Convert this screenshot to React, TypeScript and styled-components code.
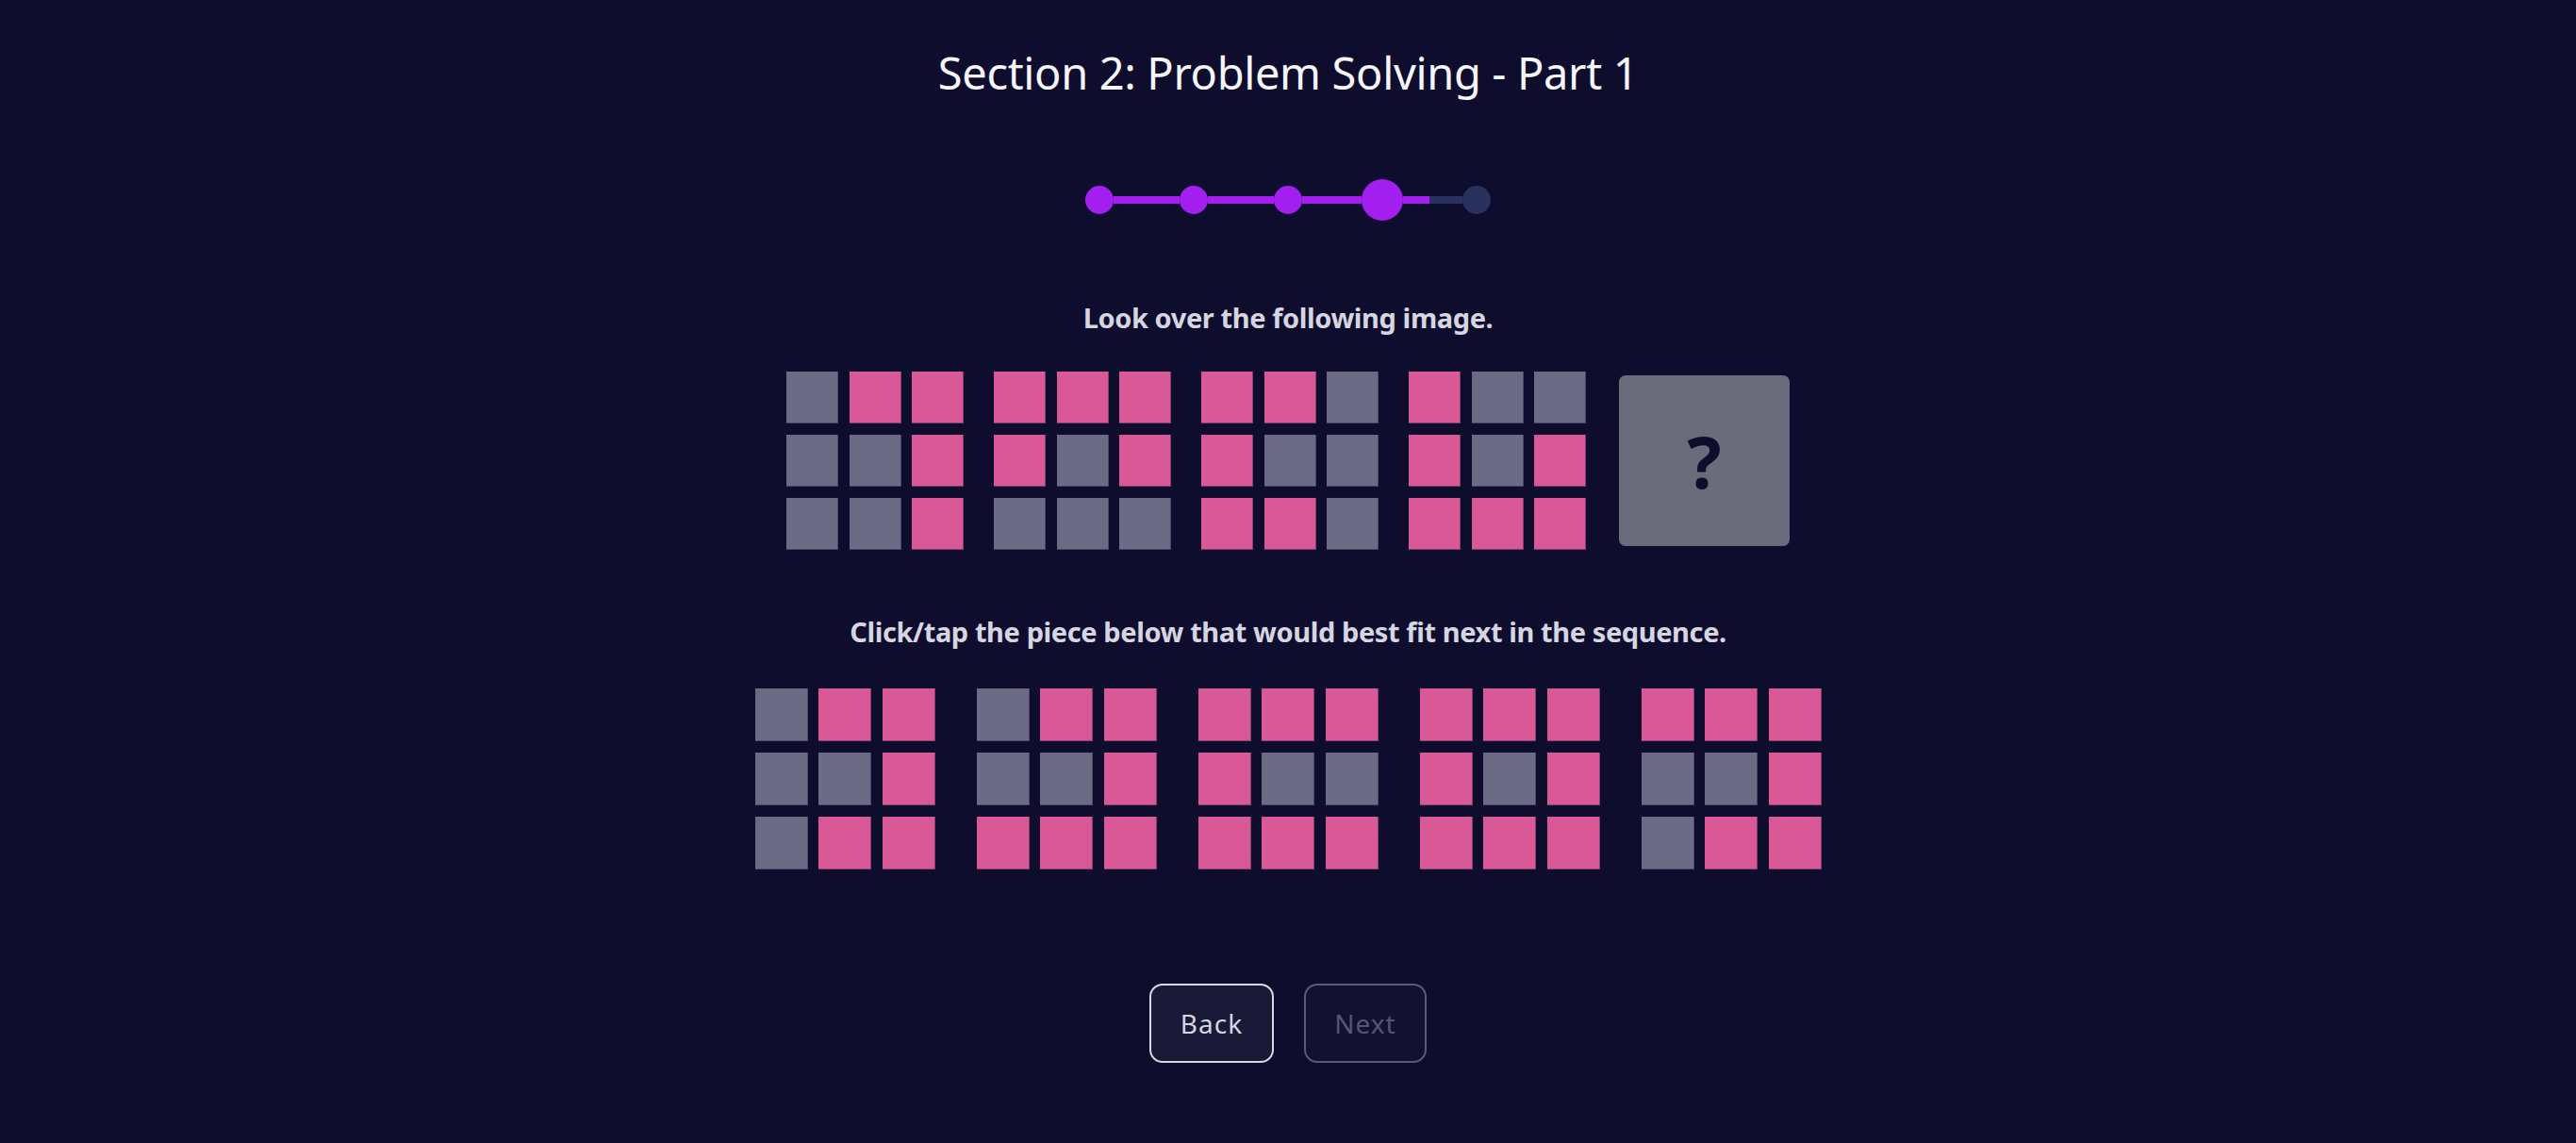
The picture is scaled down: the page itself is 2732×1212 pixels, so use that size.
import React from "react";
import styled, { createGlobalStyle } from "styled-components";

const GlobalStyle = createGlobalStyle`
  html, body {
    margin: 0;
    padding: 0;
    background: #0e0d2e;
  }
  body {
    font-family: "Noto Sans", "Open Sans", sans-serif;
  }
`;

const Page = styled.div`
  min-height: 1212px;
  box-sizing: border-box;
  padding-top: 45px;
  display: flex;
  flex-direction: column;
  align-items: center;
  background: #0e0d2e;
`;

const Title = styled.h1`
  margin: 0;
  font-size: 47px;
  font-weight: 400;
  letter-spacing: -0.35px;
  line-height: 65px;
  color: #f6f6fa;
`;

const Progress = styled.div`
  margin-top: 80px;
  height: 44px;
  display: flex;
  align-items: center;
`;

const Dot = styled.div<{ $size: number; $done: boolean }>`
  width: ${(p) => p.$size}px;
  height: ${(p) => p.$size}px;
  border-radius: 50%;
  background: ${(p) => (p.$done ? "#a21ff0" : "#29315e")};
  flex: none;
`;

const Segment = styled.div<{ $width: number; $fill: number }>`
  width: ${(p) => p.$width}px;
  height: 8px;
  flex: none;
  background: linear-gradient(
    to right,
    #a21ff0 0,
    #a21ff0 ${(p) => p.$fill}px,
    #29315e ${(p) => p.$fill}px,
    #29315e 100%
  );
`;

const Instruction = styled.p<{ $top: number }>`
  margin: ${(p) => p.$top}px 0 0;
  font-size: 29px;
  font-weight: 700;
  letter-spacing: -0.4px;
  line-height: 41px;
  color: #d6d5e0;
`;

const PuzzleRow = styled.div`
  margin-top: 37px;
  display: flex;
  align-items: center;
  gap: 32px;
`;

const Piece = styled.div<{ $cell: number }>`
  display: grid;
  grid-template-columns: repeat(3, ${(p) => p.$cell}px);
  grid-auto-rows: ${(p) => p.$cell}px;
  gap: 12px 11.5px;
`;

const Cell = styled.div<{ $on: boolean }>`
  background: ${(p) => (p.$on ? "#d95896" : "#6b6b85")};
  box-shadow: inset -1px -1px 0 rgba(40, 30, 70, 0.45);
`;

const Mystery = styled.div`
  margin-left: 3px;
  width: 181px;
  height: 181px;
  border-radius: 7px;
  background: #6c6b7c;
  display: flex;
  align-items: center;
  justify-content: center;
  font-size: 76px;
  font-weight: 700;
  color: #0e0d2e;
  line-height: 1;
`;

const OptionsRow = styled.div`
  margin-top: 40px;
  display: flex;
  gap: 44px;
`;

const OptionButton = styled.button`
  padding: 0;
  margin: 0;
  border: none;
  background: transparent;
  cursor: pointer;
`;

const Actions = styled.div`
  margin-top: 121px;
  display: flex;
  gap: 32px;
`;

const NavButton = styled.button<{ $disabled?: boolean }>`
  width: ${(p) => (p.$disabled ? 130 : 132)}px;
  height: 84px;
  box-sizing: border-box;
  border-radius: 14px;
  border: 2px solid ${(p) => (p.$disabled ? "#5b5978" : "#d9d8e2")};
  background: ${(p) => (p.$disabled ? "#121132" : "#1a1937")};
  color: ${(p) => (p.$disabled ? "#57566f" : "#d6d5e0")};
  font-family: "Noto Sans", "Open Sans", sans-serif;
  font-size: 28px;
  letter-spacing: 1px;
  cursor: ${(p) => (p.$disabled ? "default" : "pointer")};
`;

type Pattern = number[];

const sequence: Pattern[] = [
  [0, 1, 1, 0, 0, 1, 0, 0, 1],
  [1, 1, 1, 1, 0, 1, 0, 0, 0],
  [1, 1, 0, 1, 0, 0, 1, 1, 0],
  [1, 0, 0, 1, 0, 1, 1, 1, 1],
];

const options: Pattern[] = [
  [0, 1, 1, 0, 0, 1, 0, 1, 1],
  [0, 1, 1, 0, 0, 1, 1, 1, 1],
  [1, 1, 1, 1, 0, 0, 1, 1, 1],
  [1, 1, 1, 1, 0, 1, 1, 1, 1],
  [1, 1, 1, 0, 0, 1, 0, 1, 1],
];

const PieceGrid = ({ pattern, cell }: { pattern: Pattern; cell: number }) => (
  <Piece $cell={cell}>
    {pattern.map((v, i) => (
      <Cell key={i} $on={v === 1} />
    ))}
  </Piece>
);

const steps = [
  { size: 30, done: true },
  { size: 30, done: true },
  { size: 30, done: true },
  { size: 44, done: true },
  { size: 30, done: false },
];

export default function App() {
  return (
    <>
      <GlobalStyle />
      <Page>
        <Title>Section 2: Problem Solving - Part 1</Title>
        <Progress>
          {steps.map((s, i) => (
            <React.Fragment key={i}>
              {i > 0 && (
                <Segment
                  $width={100 - steps[i - 1].size / 2 - s.size / 2}
                  $fill={i === 4 ? 28 : 200}
                />
              )}
              <Dot $size={s.size} $done={s.done} />
            </React.Fragment>
          ))}
        </Progress>
        <Instruction $top={82}>Look over the following image.</Instruction>
        <PuzzleRow>
          {sequence.map((p, i) => (
            <PieceGrid key={i} pattern={p} cell={55} />
          ))}
          <Mystery>?</Mystery>
        </PuzzleRow>
        <Instruction $top={66}>
          Click/tap the piece below that would best fit next in the sequence.
        </Instruction>
        <OptionsRow>
          {options.map((p, i) => (
            <OptionButton key={i} aria-label={`Option ${i + 1}`}>
              <PieceGrid pattern={p} cell={56} />
            </OptionButton>
          ))}
        </OptionsRow>
        <Actions>
          <NavButton>Back</NavButton>
          <NavButton $disabled>Next</NavButton>
        </Actions>
      </Page>
    </>
  );
}
